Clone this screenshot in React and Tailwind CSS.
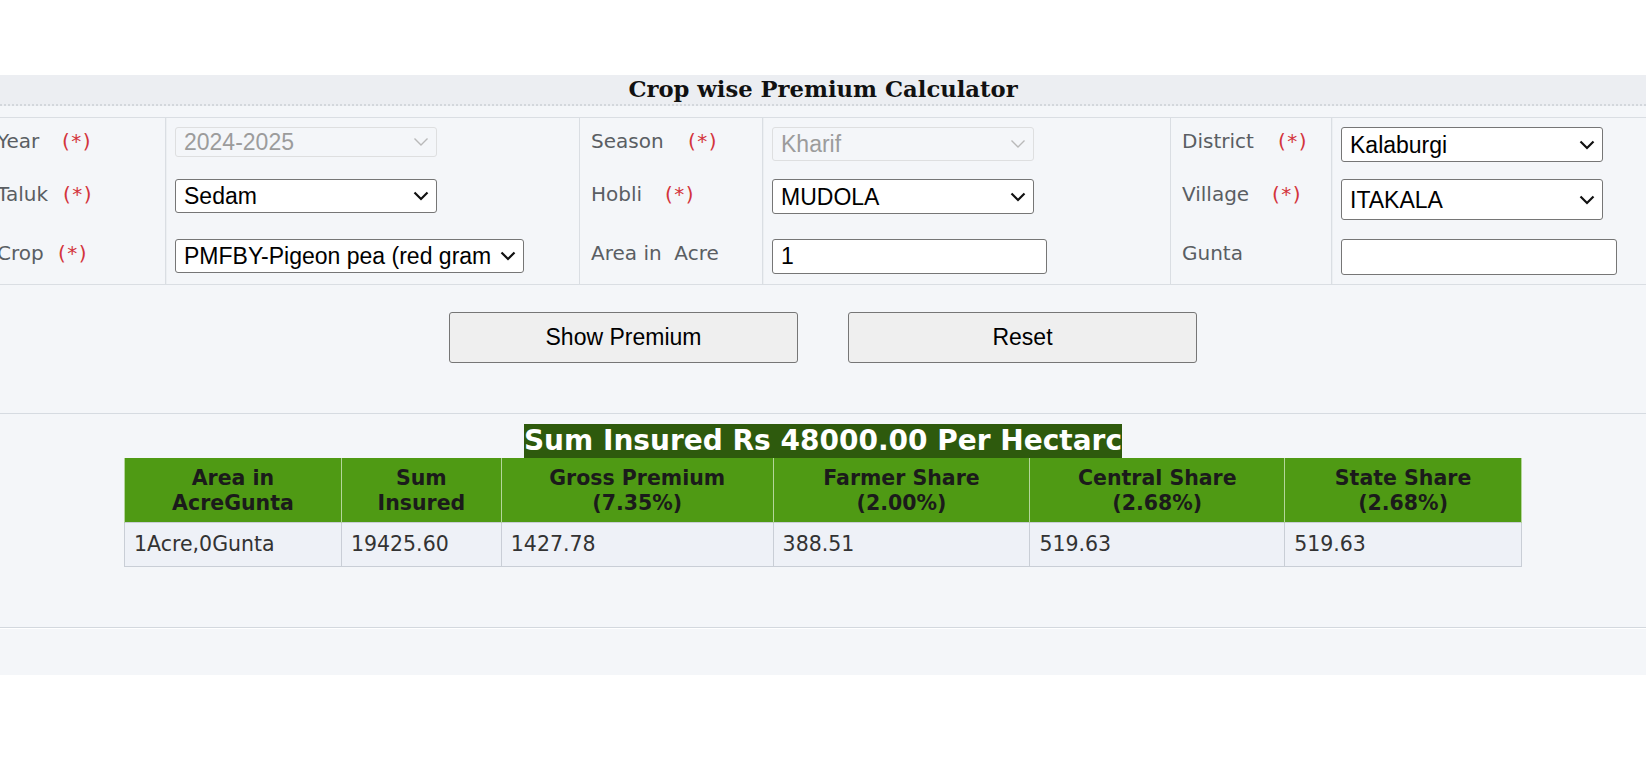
import React from "react";

const LABEL = "font-['DejaVu_Sans',Verdana,sans-serif] text-[20px] text-[#5a5e63]";
const FIELD = "font-['Liberation_Sans',Arial,sans-serif] text-[23px]";

const Req = () => <span className="tracking-[1.5px] text-[#d3343c]">(*)</span>;

const Chevron = ({ disabled }) => (
  <svg
    width="16"
    height="10"
    viewBox="0 0 16 10"
    className="pointer-events-none absolute right-[8px] top-1/2 -translate-y-1/2"
  >
    <polyline
      points="1.5,1.5 8,8 14.5,1.5"
      fill="none"
      stroke={disabled ? "#b9b9b9" : "#111"}
      strokeWidth={disabled ? "1.4" : "2.2"}
    />
  </svg>
);

const Select = ({ value, disabled, className }) => (
  <div className={`relative ${className}`}>
    <select
      disabled={disabled}
      defaultValue={value}
      className={`h-full w-full appearance-none rounded-[3px] border py-0 pl-[8px] pr-[30px] leading-[26px] ${FIELD} ${
        disabled
          ? "border-[#dedfe0] bg-transparent text-[#9c9c9c]"
          : "border-[#767676] bg-white text-black"
      }`}
    >
      <option>{value}</option>
    </select>
    <Chevron disabled={disabled} />
  </div>
);

const TextBox = ({ value, className }) => (
  <input
    type="text"
    defaultValue={value}
    className={`rounded-[3px] border border-[#767676] bg-white pl-[8px] text-black ${FIELD} ${className}`}
  />
);

const LabelCell = ({ children, req, w, className = "" }) => (
  <div className={`flex items-center border-r border-[#dadee3] pl-[11px] ${LABEL} ${className}`}>
    <span className={`whitespace-pre ${w}`}>{children}</span>
    {req && <Req />}
  </div>
);

const FieldCell = ({ children, last, top }) => (
  <div
    className={`flex items-start border-l border-[#eceff2] pl-[8px] ${top} ${
      last ? "" : "border-r border-r-[#dadee3]"
    }`}
  >
    {children}
  </div>
);

const columns = [
  { title: ["Area in", "AcreGunta"], w: "w-[217px]" },
  { title: ["Sum", "Insured"], w: "w-[160px]" },
  { title: ["Gross Premium", "(7.35%)"], w: "w-[272px]" },
  { title: ["Farmer Share", "(2.00%)"], w: "w-[257px]" },
  { title: ["Central Share", "(2.68%)"], w: "w-[255px]" },
  { title: ["State Share", "(2.68%)"], w: "w-[237px]" },
];

const row = ["1Acre,0Gunta", "19425.60", "1427.78", "388.51", "519.63", "519.63"];

export default function App() {
  return (
    <div className="min-h-screen bg-white">
      <div className="h-[75px]" />

      <div className="overflow-hidden bg-[#f4f6f9]">
        {/* title band */}
        <div className="flex h-[31px] items-center justify-center border-b-2 border-dotted border-[#d3d7dc] bg-[#eceef2]">
          <h1 className="font-['DejaVu_Serif',Georgia,serif] text-[22.7px] font-bold text-[#111]">
            Crop wise Premium Calculator
          </h1>
        </div>

        <div className="h-[11px]" />

        {/* form */}
        <div className="-ml-[14px] grid w-[calc(100%+14px)] grid-cols-[180px_414px_183px_408px_161px_1fr] grid-rows-[50px_58px_58px] border-y border-[#dadee3]">
          <LabelCell req w="w-[65px]" className="pb-[5px]">Year</LabelCell>
          <FieldCell top="pt-[9px]">
            <Select disabled value="2024-2025" className="h-[30px] w-[262px]" />
          </FieldCell>
          <LabelCell req w="w-[97px]" className="pb-[5px]">Season</LabelCell>
          <FieldCell top="pt-[9px]">
            <Select disabled value="Kharif" className="h-[34px] w-[262px]" />
          </FieldCell>
          <LabelCell req w="w-[96px]" className="pb-[5px]">District</LabelCell>
          <FieldCell last top="pt-[9px]">
            <Select value="Kalaburgi" className="h-[35px] w-[262px]" />
          </FieldCell>

          <LabelCell req w="w-[66px]" className="pb-[6px]">Taluk</LabelCell>
          <FieldCell top="pt-[11px]">
            <Select value="Sedam" className="h-[34px] w-[262px]" />
          </FieldCell>
          <LabelCell req w="w-[74px]" className="pb-[6px]">Hobli</LabelCell>
          <FieldCell top="pt-[11px]">
            <Select value="MUDOLA" className="h-[35px] w-[262px]" />
          </FieldCell>
          <LabelCell req w="w-[90px]" className="pb-[6px]">Village</LabelCell>
          <FieldCell last top="pt-[11px]">
            <Select value="ITAKALA" className="h-[41px] w-[262px]" />
          </FieldCell>

          <LabelCell req w="w-[61px]" className="pb-[5px]">Crop</LabelCell>
          <FieldCell top="pt-[13px]">
            <Select value="PMFBY-Pigeon pea (red gram" className="h-[34px] w-[349px]" />
          </FieldCell>
          <LabelCell w="w-[140px]" className="pb-[5px]">{"Area in  Acre"}</LabelCell>
          <FieldCell top="pt-[13px]">
            <TextBox value="1" className="h-[35px] w-[275px]" />
          </FieldCell>
          <LabelCell w="w-[140px]" className="pb-[5px]">Gunta</LabelCell>
          <FieldCell last top="pt-[13px]">
            <TextBox value="" className="h-[36px] w-[276px]" />
          </FieldCell>
        </div>

        {/* buttons */}
        <div className="flex h-[129px] justify-center gap-[50px] border-b border-[#d6dbe1] pt-[27px]">
          <button className={`h-[51px] w-[349px] rounded-[3px] border border-[#767676] bg-[#efefef] text-black ${FIELD}`}>
            Show Premium
          </button>
          <button className={`h-[51px] w-[349px] rounded-[3px] border border-[#767676] bg-[#efefef] text-black ${FIELD}`}>
            Reset
          </button>
        </div>

        {/* result */}
        <div className="h-[214px] border-b border-[#d3d8de] pt-[10px]">
          <div className="text-center">
            <span className="inline-block bg-[#2e5a0d] font-['DejaVu_Sans',Verdana,sans-serif] text-[28px] font-bold leading-[34px] text-white">
              Sum Insured Rs 48000.00 Per Hectarc
            </span>
          </div>
          <table className="mx-auto w-[1398px] border-collapse font-['DejaVu_Sans',Verdana,sans-serif] text-[20px] leading-[25px]">
            <thead>
              <tr className="bg-[#4f9a14]">
                {columns.map((c) => (
                  <th
                    key={c.title[0]}
                    className={`h-[64px] border-x border-[#b4d69a] pt-[3px] text-center text-[20.5px] font-bold text-[#1b1b1b] ${c.w}`}
                  >
                    {c.title[0]}
                    <br />
                    {c.title[1]}
                  </th>
                ))}
              </tr>
            </thead>
            <tbody>
              <tr className="bg-[#eef1f7]">
                {row.map((v, i) => (
                  <td key={i} className="h-[44px] border border-[#c9ced6] pl-[9px] text-[20.5px] text-[#333]">
                    {v}
                  </td>
                ))}
              </tr>
            </tbody>
          </table>
        </div>

        <div className="h-[47px] border-t border-white" />
      </div>
    </div>
  );
}
